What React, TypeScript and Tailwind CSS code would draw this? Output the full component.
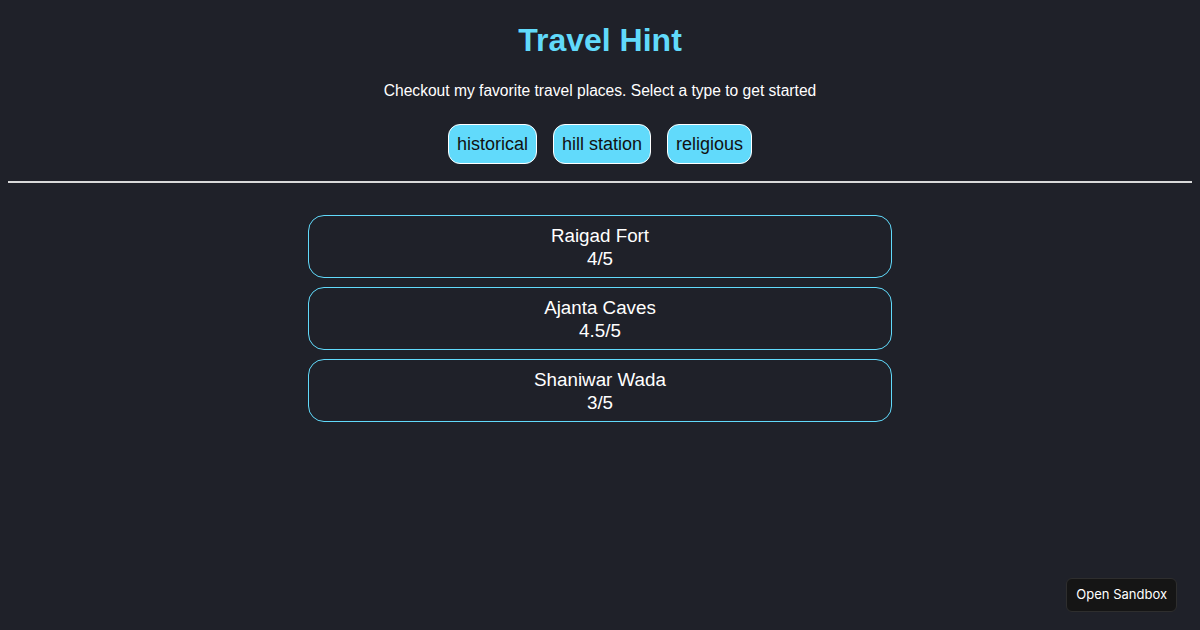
import { useState } from 'react';

const places: Record<string, { name: string; rating: string }[]> = {
  historical: [
    { name: 'Raigad Fort', rating: '4/5' },
    { name: 'Ajanta Caves', rating: '4.5/5' },
    { name: 'Shaniwar Wada', rating: '3/5' },
  ],
  'hill station': [
    { name: 'Lonavala', rating: '4/5' },
    { name: 'Mahabaleshwar', rating: '4.5/5' },
  ],
  religious: [
    { name: 'Shirdi', rating: '4.5/5' },
    { name: 'Pandharpur', rating: '4/5' },
  ],
};

export default function App() {
  const [type, setType] = useState('historical');

  return (
    <div className="min-h-[630px] bg-[#1f2129] text-white px-2 font-['Liberation_Sans',Arial,sans-serif] relative">
      <h1 className="pt-[19px] text-center text-[32px] font-bold leading-[42px] text-[#61dafb]">Travel Hint</h1>
      <p className="mt-[21px] text-center text-[15.6px] leading-[18px]">
        Checkout my favorite travel places. Select a type to get started
      </p>
      <div className="mt-[24px] flex justify-center gap-4">
        {Object.keys(places).map((t) => (
          <button
            key={t}
            onClick={() => setType(t)}
            className="h-10 px-2 rounded-xl border border-white bg-[#61dafb] text-[18px] text-[#111] cursor-pointer"
          >
            {t}
          </button>
        ))}
      </div>
      <hr className="mt-[17px] border-t-2 border-[#d9d9d9]" />
      <div className="mt-[32px] flex flex-col items-center gap-[9px]">
        {places[type].map((p) => (
          <div
            key={p.name}
            className="w-[584px] h-[63px] rounded-2xl border border-[#61dafb] flex flex-col items-center justify-center text-[18.8px] leading-[23px]"
          >
            <div>{p.name}</div>
            <div>{p.rating}</div>
          </div>
        ))}
      </div>
      <button className="absolute right-[23px] bottom-[18px] h-[34px] px-[9px] rounded-md border border-[#2e2e2e] bg-[#151515] text-[13px] text-white font-['Inter',sans-serif]">
        Open Sandbox
      </button>
    </div>
  );
}
